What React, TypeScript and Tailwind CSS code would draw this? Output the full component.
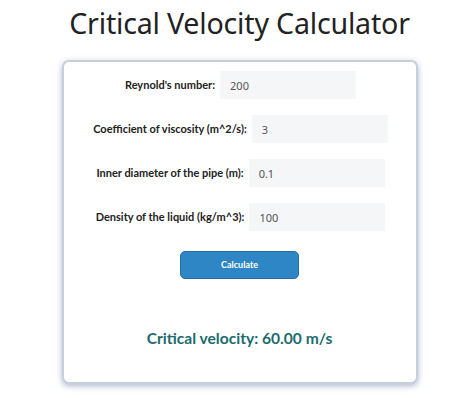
import React from "react";

const fields = [
  { label: "Reynold's number:", value: "200" },
  { label: "Coefficient of viscosity (m^2/s):", value: "3" },
  { label: "Inner diameter of the pipe (m):", value: "0.1" },
  { label: "Density of the liquid (kg/m^3):", value: "100" },
];

export default function App() {
  return (
    <div
      className="w-[474px] h-[400px] bg-white flex flex-col items-center pl-[5px]"
      style={{ fontFamily: '"Noto Sans", "Open Sans", sans-serif' }}
    >
      <h1 className="mt-[1px] h-[44px] text-[28.6px] leading-[44px] text-[#222] font-normal tracking-[-0.2px]">
        Critical Velocity Calculator
      </h1>
      <div className="mt-[15px] w-[356px] h-[324px] bg-white rounded-[7px] border-2 border-[#c5d0dc] shadow-[0_2px_6px_rgba(70,100,140,0.45)] flex flex-col items-center pt-[9px]">
        <div className="flex flex-col gap-[16px]">
          {fields.map((f) => (
            <div key={f.label} className="flex items-center justify-center gap-[3px]">
              <label
                className="text-[11px] font-bold text-[#222] px-[2px]"
                style={{ fontFamily: 'Lato, sans-serif' }}
              >
                {f.label}
              </label>
              <input
                readOnly
                value={f.value}
                className="w-[136px] h-[28px] bg-[#f5f6f7] pl-[10px] text-[11px] text-[#555] outline-none"
              />
            </div>
          ))}
        </div>
        <button
          className="mt-[20px] w-[119px] h-[28px] rounded-[5px] bg-[#2e87c4] border border-[#276ea3] text-white text-[9px] font-bold"
          style={{ fontFamily: 'Lato, sans-serif' }}
        >
          Calculate
        </button>
        <div
          className="mt-[48px] text-[15.6px] font-bold text-[#1c6b6e]"
          style={{ fontFamily: 'Lato, sans-serif' }}
        >
          Critical velocity: 60.00 m/s
        </div>
      </div>
    </div>
  );
}
